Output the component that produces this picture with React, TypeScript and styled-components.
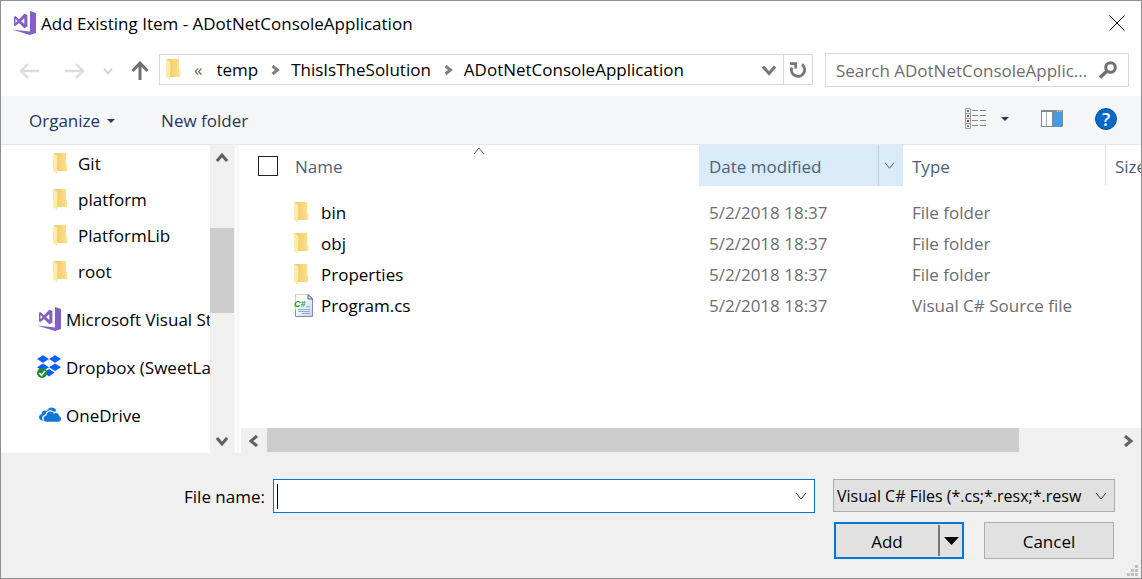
import React from "react";
import styled, { createGlobalStyle, css } from "styled-components";

const GlobalStyle = createGlobalStyle`
  * { box-sizing: border-box; }
  html, body { margin: 0; }
  body, button, input, select {
    font-family: "Open Sans", "Noto Sans", sans-serif;
    font-size: 17px;
    line-height: 24px;
    color: #000;
  }
  button { margin: 0; padding: 0; border: 0; background: none; }
  svg { display: block; flex: none; }
`;

/* ---------- window ---------- */

const Dialog = styled.div`
  display: flex;
  flex-direction: column;
  min-height: 100vh;
  border: 1px solid #8f8f8f;
  background: #fff;
`;

const TitleBar = styled.header`
  display: flex;
  align-items: center;
  height: 44px;
  padding: 0 16px 0 11px;
  gap: 5px;
`;

const Title = styled.h1`
  flex: 1;
  margin: 0;
  padding-top: 2px;
  font-size: 17px;
  font-weight: 400;
  white-space: nowrap;
`;

const IconButton = styled.button`
  display: flex;
  align-items: center;
  justify-content: center;
  flex: none;
`;

/* ---------- navigation ---------- */

const NavRow = styled.nav`
  display: flex;
  align-items: center;
  height: 51px;
  padding: 0 12px 0 18px;
`;

const History = styled.div`
  display: flex;
  align-items: center;
  gap: 18px;
  flex: none;
`;

const Travel = styled.div`
  display: flex;
  gap: 26px;
`;

const AddressBar = styled.div`
  display: flex;
  align-items: stretch;
  flex: 1;
  min-width: 0;
  height: 31px;
  margin: -2px 12px 0 10px;
  border: 1px solid #d9d9d9;
`;

const Crumbs = styled.ol`
  display: flex;
  align-items: center;
  flex: 1;
  min-width: 0;
  margin: 0;
  padding: 0 0 0 6px;
  list-style: none;
  white-space: nowrap;
  overflow: hidden;
`;

const Crumb = styled.li<{ $lead?: boolean }>`
  display: flex;
  align-items: center;
  margin-right: ${(p) => (p.$lead ? 14 : 11)}px;
  gap: 12px;
`;

const Overflowed = styled.span`
  color: #606060;
`;

const AddressButton = styled(IconButton)<{ $divided?: boolean }>`
  width: 29px;
  ${(p) => p.$divided && css`border-left: 1px solid #d9d9d9;`}
`;

const SearchBox = styled.label`
  display: flex;
  align-items: center;
  width: 304px;
  height: 34px;
  margin-top: -2px;
  padding: 0 11px 0 10px;
  border: 1px solid #d9d9d9;
`;

const SearchInput = styled.input`
  flex: 1;
  min-width: 0;
  padding: 2px 0 0;
  border: 0;
  outline: 0;
  background: none;
  text-overflow: ellipsis;
  &::placeholder { color: #6d6d6d; opacity: 1; }
`;

/* ---------- toolbar ---------- */

const Toolbar = styled.div`
  display: flex;
  align-items: center;
  height: 49px;
  padding: 0 24px 0 28px;
  background: #f5f6f7;
  border-bottom: 1px solid #e5e7ea;
`;

const ToolButton = styled.button`
  display: flex;
  align-items: center;
  gap: 7px;
  margin-right: 46px;
  padding-top: 2px;
  color: #1e395b;
`;

const ToolIcons = styled.div`
  display: flex;
  align-items: center;
  gap: 32px;
  height: 45px;
  margin-left: auto;
  align-self: flex-start;
`;

const ViewButton = styled(IconButton)`
  gap: 15px;
`;

/* ---------- body ---------- */

const Body = styled.div`
  display: flex;
  height: 308px;
`;

const Sidebar = styled.aside`
  display: flex;
  flex: none;
  width: 238px;
  padding-right: 4px;
  box-shadow: inset -2px 0 #f5f5f5;
`;

const Tree = styled.ul`
  flex: 1;
  min-width: 0;
  margin: 0;
  padding: 0;
  list-style: none;
  overflow: hidden;
  white-space: nowrap;
`;

const TreeItem = styled.li<{ $root?: boolean }>`
  display: flex;
  align-items: center;
  height: 36px;
  padding-left: ${(p) => (p.$root ? 36 : 52)}px;
  margin-top: ${(p) => (p.$root ? 12 : 0)}px;
  gap: ${(p) => (p.$root ? 5 : 11)}px;
`;

const TreeLabel = styled.span`
  padding-top: 2px;
`;

const ScrollBar = styled.div<{ $vertical?: boolean }>`
  display: flex;
  flex: none;
  flex-direction: ${(p) => (p.$vertical ? "column" : "row")};
  ${(p) => (p.$vertical ? "width: 25px;" : "height: 25px; margin-left: 2px;")}
  background: #f0f0f0;
`;

const ScrollArrow = styled(IconButton)`
  width: 26px;
  height: 25px;
`;

const ScrollArrowTall = styled(IconButton)`
  width: 24px;
  height: 25px;
`;

const Track = styled.div<{ $vertical?: boolean }>`
  flex: 1;
  ${(p) => (p.$vertical ? "padding: 58px 1px 0 0;" : "padding: 0 96px 1px 0;")}
`;

const Thumb = styled.div<{ $vertical?: boolean }>`
  height: ${(p) => (p.$vertical ? "85px" : "100%")};
  background: #cdcdcd;
`;

const Files = styled.main`
  display: flex;
  flex-direction: column;
  flex: 1;
  min-width: 0;
`;

const TableArea = styled.div`
  flex: 1;
  overflow: hidden;
`;

const FileTable = styled.table`
  width: 100%;
  table-layout: fixed;
  border-collapse: separate;
  border-spacing: 0;
  white-space: nowrap;
  tbody::before { content: ""; display: block; height: 11px; }
`;

const Column = styled.col<{ $width?: number }>`
  width: ${(p) => (p.$width ? `${p.$width}px` : "auto")};
`;

const HeadCell = styled.th<{ $hot?: boolean; $edge?: boolean }>`
  position: relative;
  height: 41px;
  padding: ${(p) => (p.$hot ? "0" : "2px 0 0 9px")};
  text-align: left;
  font-weight: 400;
  color: #4c607a;
  overflow: hidden;
  background: ${(p) => (p.$hot ? "#d9ebf9" : "transparent")};
  ${(p) => p.$edge && css`border-right: 1px solid #e2e2e2;`}
`;

const NameHead = styled.div`
  display: flex;
  align-items: center;
  gap: 17px;
  padding-left: 10px;
`;

const HotHead = styled.div`
  display: flex;
  align-items: stretch;
  height: 41px;
  line-height: 43px;
`;

const HotLabel = styled.span`
  flex: 1;
  padding-left: 10px;
  border-right: 1px solid #b9cfe0;
`;

const HeadMenu = styled(IconButton)`
  width: 24px;
  padding-right: 4px;
`;

const SortMark = styled.span`
  position: absolute;
  top: 0;
  left: 0;
  right: 0;
  padding-left: 20px;
  display: flex;
  justify-content: center;
`;

const Checkbox = styled.input`
  appearance: none;
  width: 20px;
  height: 20px;
  margin: 0 0 2px;
  border: 1px solid #222;
  background: #fff;
`;

const Cell = styled.td<{ $inset?: number }>`
  height: 31px;
  padding: 0 0 0 ${(p) => p.$inset ?? 9}px;
  color: #6d6d6d;
`;

const FileName = styled.span`
  display: grid;
  grid-template-columns: 27px auto;
  align-items: center;
  color: #000;
`;

/* ---------- footer ---------- */

const Footer = styled.form`
  position: relative;
  flex: 1;
  display: grid;
  grid-template-columns: 264px minmax(0, 1fr) 282px;
  grid-template-rows: 34px 37px;
  row-gap: 9px;
  padding: 26px 26px 19px 0;
  background: #f0f0f0;
`;

const FieldLabel = styled.label`
  text-align: right;
  line-height: 36px;
`;

const ComboBox = styled.div`
  display: flex;
  align-items: center;
  margin: 0 18px 0 8px;
  padding: 0 7px 0 3px;
  border: 1px solid #0078d7;
  background: #fff;
`;

const Caret = styled.span`
  width: 1px;
  height: 25px;
  background: #000;
`;

const NameInput = styled.input`
  flex: 1;
  min-width: 0;
  padding: 0;
  border: 0;
  outline: 0;
  background: none;
`;

const FilterBox = styled.div`
  position: relative;
  height: 33px;
`;

const Filter = styled.select`
  appearance: none;
  width: 100%;
  height: 33px;
  padding: 1px 28px 0 3px;
  border: 1px solid #adadad;
  border-radius: 0;
  background: #e1e1e1;
  font-size: 16px;
`;

const FilterArrow = styled.span`
  position: absolute;
  right: 8px;
  top: 11px;
  pointer-events: none;
`;

const Actions = styled.div`
  grid-column: 3;
  display: flex;
  justify-content: space-between;
  padding: 0 1px;
`;

const SplitButton = styled.div`
  display: flex;
  align-items: stretch;
  width: 130px;
  border: 2px solid #0078d7;
  background: #e1e1e1;
`;

const AddButton = styled.button`
  flex: 1;
  padding-top: 2px;
`;

const AddMenu = styled(IconButton)`
  width: 24px;
  margin: 1px 0;
  border-left: 2px solid #777;
`;

const CancelButton = styled.button`
  width: 130px;
  padding-top: 2px;
  border: 1px solid #adadad;
  background: #e1e1e1;
`;

const Grip = styled.span`
  position: absolute;
  right: 3px;
  bottom: 2px;
`;

/* ---------- icons ---------- */

const VisualStudioIcon = () => (
  <svg width="24" height="24" viewBox="0 0 24 24" fill="#865fc5" aria-hidden="true">
    <path d="M18 0 24 2V22L18 24 0 18.5 18 20.5Z" />
    <path
      fillRule="evenodd"
      d="M12.3 2.7 15.4 4V15.8L12.3 17.2 7 12 3.4 15 2 14.4V5.8L3.4 5.1 7 8.2ZM3.5 8V12L5.6 10ZM12.3 7.2 9 10 12.3 13Z"
    />
  </svg>
);

const FolderIcon = () => (
  <svg width="14" height="21" viewBox="0 0 14 21" aria-hidden="true">
    <defs>
      <linearGradient id="folderBack" x1="0" x2="1">
        <stop offset="0.2" stopColor="#efcb6c" />
        <stop offset="1" stopColor="#ffe08a" />
      </linearGradient>
    </defs>
    <path d="M0 0H13V11L14 12V18H4V3Z" fill="url(#folderBack)" />
    <path d="M0 0 4.5 3.5 4 19V21L0 18Z" fill="#ffeaaa" />
  </svg>
);

const SourceFileIcon = () => (
  <svg width="19" height="23" viewBox="0 0 19 23" aria-hidden="true">
    <defs>
      <linearGradient id="sheet" x1="0" y1="0" x2="1" y2="1">
        <stop offset="0.3" stopColor="#fff" />
        <stop offset="1" stopColor="#c3d0ea" />
      </linearGradient>
    </defs>
    <path d="M1.5 .5H14L18.5 5V22.5H1.5Z" fill="url(#sheet)" stroke="#7a8fb2" />
    <path d="M1.5 16V.5H14" fill="none" stroke="#c6d2dc" />
    <path d="M14 .5V5H18.5Z" fill="#e8eef8" stroke="#4f6075" />
    <path d="M12 12.5H16M4 15.5H16M4 17.5H16M8 19.5H16" stroke="#9aabc9" />
    <text x="0" y="13" fontFamily="Liberation Sans, sans-serif" fontSize="9" fontWeight="700" fontStyle="italic" fill="#17a117">
      C#
    </text>
  </svg>
);

const DropboxIcon = () => (
  <svg width="24" height="24" viewBox="0 0 24 24" aria-hidden="true">
    <path
      fill="#0061ff"
      d="M6 .3 12 4 6 7.8 0 4ZM18 .3 24 4 18 7.8 12 4ZM6 8.6 12 12.3 6 16 0 12.3ZM18 8.6 24 12.3 18 16 12 12.3ZM12 14 17.5 17.5 12 21.5 6.5 17.5Z"
    />
    <circle cx="5" cy="18" r="5" fill="#1d8a2c" />
    <path d="M2.3 18 4.5 20.2 8 16" fill="none" stroke="#fff" strokeWidth="1.6" />
  </svg>
);

const OneDriveIcon = () => (
  <svg width="24" height="24" viewBox="0 0 24 24" fill="#0f78d7" aria-hidden="true">
    <path d="M6 17.5H5C3 17.3 2 15.8 2 14.3 2 12.6 3.2 11.5 4.6 11.2 4.6 9 6.2 7.5 8 7.5 8.700 7.5 9.3 7.7 9.8 8 10.8 6 12.6 4.500 14.5 4.500 17 4.500 19 6 19.6 8.400 18.5 8.200 17.600 8.400 16.900 8.800 16 7.800 14.700 7.200 13.300 7.200 11 7.200 9 8.900 8.400 11.400 6.500 11.900 5 13.300 5 15.300 5 16.200 5.500 17 6 17.500Z" />
    <path d="M9.5 18.7C7.7 18.7 6.5 17.4 6.5 15.7 6.5 14 7.8 12.7 9.5 12.6 9.5 10.3 11.2 8.6 13.4 8.6 14.9 8.6 16.2 9.4 16.9 10.7 17.5 10.2 18.2 9.9 19 9.9 20.7 9.9 22 11.2 22 12.9 23.2 13.2 24 14.4 24 15.7 24 17.4 22.8 18.7 21.2 18.7Z" />
  </svg>
);

type ChevronProps = { dir: "up" | "down" | "left" | "right"; size?: number; weight?: number; color?: string };

const turns = { down: 0, left: 90, up: 180, right: 270 };

const Chevron = ({ dir, size = 12, weight = 3, color = "#606060" }: ChevronProps) => (
  <svg width={size} height={size} viewBox={`0 0 ${size} ${size}`} aria-hidden="true">
    <path
      transform={`rotate(${turns[dir]} ${size / 2} ${size / 2})`}
      d={`M1 ${size / 4}L${size / 2} ${size * 0.75}L${size - 1} ${size / 4}`}
      fill="none"
      stroke={color}
      strokeWidth={weight}
    />
  </svg>
);

const ArrowIcon = ({ flip }: { flip?: boolean }) => (
  <svg width="20" height="16" viewBox="0 0 20 16" aria-hidden="true">
    <path
      transform={flip ? "rotate(180 10 8)" : undefined}
      d="M20 8H2M9 1 2 8 9 15"
      fill="none"
      stroke="#dcdcdc"
      strokeWidth="2.4"
    />
  </svg>
);

const UpIcon = () => (
  <svg width="18" height="19" viewBox="0 0 18 19" aria-hidden="true">
    <path d="M9 19V2M1.5 10 9 2 16.5 10" fill="none" stroke="#707070" strokeWidth="3" />
  </svg>
);

const TriangleIcon = ({ width = 8, height = 4, color = "#1e395b" }) => (
  <svg width={width} height={height} viewBox="0 0 10 5" preserveAspectRatio="none" fill={color} aria-hidden="true">
    <path d="M0 0H10L5 5Z" />
  </svg>
);

const RefreshIcon = () => (
  <svg width="18" height="18" viewBox="0 0 18 18" aria-hidden="true">
    <path d="M13 3.5A6.6 6.6 0 1 1 2.800 6.500" fill="none" stroke="#777" strokeWidth="3" />
    <path d="M1 1.300H8V7.500H5.300V4H1Z" fill="#777" />
  </svg>
);

const SearchIcon = () => (
  <svg width="18" height="18" viewBox="0 0 18 18" fill="none" stroke="#707070" aria-hidden="true">
    <circle cx="11.500" cy="6.500" r="4.800" strokeWidth="3" />
    <path d="M7.500 10.500 1 16.500" strokeWidth="3.400" />
  </svg>
);

const CloseIcon = () => (
  <svg width="16" height="16" viewBox="0 0 16 16" aria-hidden="true">
    <path d="M.5 .5 15.5 15.5M15.5 .5 .5 15.5" stroke="#000" />
  </svg>
);

const DetailsIcon = () => (
  <svg width="21" height="21" viewBox="0 0 21 21" fill="none" aria-hidden="true">
    <path d="M.5 .5H5.5V20.5H.5ZM.5 5.5H5.5M.5 10.5H5.5M.5 15.5H5.5" stroke="#9a9a9a" />
    <path d="M7 2.5H13M15 2.5H21M7 7.5H13M15 7.5H21M7 12.5H13M15 12.5H21M7 17.5H13M15 17.5H21" stroke="#858585" />
    <path d="M2 2H4V4H2Z" fill="#3f7fc0" />
    <path d="M2 7H4V9H2Z" fill="#8a6a3a" />
    <path d="M2 12H4V14H2Z" fill="#d02020" />
    <path d="M2 17H4V19H2Z" fill="#7fa850" />
  </svg>
);

const PaneIcon = () => (
  <svg width="22" height="17" viewBox="0 0 22 17" aria-hidden="true">
    <path d="M.5 .5H21.5V16.5H.5Z" fill="#fff" stroke="#808890" />
    <path d="M0 0H22V2H0Z" fill="#808890" />
    <path d="M16 1H17M18 1H19M20 1H21" stroke="#fff" />
    <path d="M5.5 2V16" stroke="#a8adb2" />
    <path d="M12 2H21V16H12Z" fill="#459be3" />
    <path d="M11.5 2V16" stroke="#808890" />
  </svg>
);

const HelpBadge = styled(IconButton)`
  width: 22px;
  height: 22px;
  border: 1px solid #0a4f94;
  border-radius: 50%;
  background: #0669c8;
  color: #fff;
  font-size: 18px;
  font-weight: 600;
`;

const GripIcon = () => (
  <svg width="11" height="11" viewBox="0 0 11 11" fill="#bfbfbf" aria-hidden="true">
    <path d="M8 0H11V3H8ZM4 4H7V7H4ZM8 4H11V7H8ZM0 8H3V11H0ZM4 8H7V11H4ZM8 8H11V11H8Z" />
  </svg>
);

/* ---------- data ---------- */

const folders = ["Git", "platform", "PlatformLib", "root"];

const roots = [
  { label: "Microsoft Visual Studio", icon: <VisualStudioIcon /> },
  { label: "Dropbox (SweetLabs)", icon: <DropboxIcon /> },
  { label: "OneDrive", icon: <OneDriveIcon /> },
];

const files = [
  { name: "bin", type: "File folder" },
  { name: "obj", type: "File folder" },
  { name: "Properties", type: "File folder" },
  { name: "Program.cs", type: "Visual C# Source file" },
];

export default function App() {
  return (
    <Dialog role="dialog" aria-labelledby="dialog-title">
      <GlobalStyle />
      <TitleBar>
        <VisualStudioIcon />
        <Title id="dialog-title">Add Existing Item - ADotNetConsoleApplication</Title>
        <IconButton aria-label="Close"><CloseIcon /></IconButton>
      </TitleBar>

      <NavRow>
        <History>
          <Travel>
            <IconButton aria-label="Back"><ArrowIcon /></IconButton>
            <IconButton aria-label="Forward"><ArrowIcon flip /></IconButton>
          </Travel>
          <IconButton aria-label="Recent locations">
            <Chevron dir="down" size={10} weight={2} color="#d4d4d4" />
          </IconButton>
          <IconButton aria-label="Up"><UpIcon /></IconButton>
        </History>
        <AddressBar>
          <Crumbs>
            <Crumb $lead><FolderIcon /></Crumb>
            <Crumb $lead><Overflowed>«</Overflowed></Crumb>
            <Crumb>temp <Chevron dir="right" size={10} color="#808080" /></Crumb>
            <Crumb>ThisIsTheSolution <Chevron dir="right" size={10} color="#808080" /></Crumb>
            <Crumb>ADotNetConsoleApplication</Crumb>
          </Crumbs>
          <AddressButton aria-label="Previous locations"><Chevron dir="down" size={14} color="#777" /></AddressButton>
          <AddressButton $divided aria-label="Refresh"><RefreshIcon /></AddressButton>
        </AddressBar>
        <SearchBox>
          <SearchInput type="text" aria-label="Search" placeholder="Search ADotNetConsoleApplic..." />
          <SearchIcon />
        </SearchBox>
      </NavRow>

      <Toolbar>
        <ToolButton>Organize <TriangleIcon /></ToolButton>
        <ToolButton>New folder</ToolButton>
        <ToolIcons>
          <ViewButton aria-label="Change view"><DetailsIcon /><TriangleIcon /></ViewButton>
          <IconButton aria-label="Preview pane"><PaneIcon /></IconButton>
          <HelpBadge aria-label="Help">?</HelpBadge>
        </ToolIcons>
      </Toolbar>

      <Body>
        <Sidebar>
          <Tree>
            {folders.map((name) => (
              <TreeItem key={name}><FolderIcon /><TreeLabel>{name}</TreeLabel></TreeItem>
            ))}
            {roots.map((root) => (
              <TreeItem key={root.label} $root>{root.icon}<TreeLabel>{root.label}</TreeLabel></TreeItem>
            ))}
          </Tree>
          <ScrollBar $vertical>
            <ScrollArrowTall aria-label="Scroll up"><Chevron dir="up" /></ScrollArrowTall>
            <Track $vertical><Thumb $vertical /></Track>
            <ScrollArrowTall aria-label="Scroll down"><Chevron dir="down" /></ScrollArrowTall>
          </ScrollBar>
        </Sidebar>

        <Files>
          <TableArea>
            <FileTable>
              <colgroup>
                <Column />
                <Column $width={204} />
                <Column $width={203} />
                <Column $width={35} />
              </colgroup>
              <thead>
                <tr>
                  <HeadCell>
                    <NameHead>
                      <Checkbox type="checkbox" aria-label="Select all" />
                      Name
                    </NameHead>
                    <SortMark><Chevron dir="up" size={12} weight={1} /></SortMark>
                  </HeadCell>
                  <HeadCell $hot>
                    <HotHead>
                      <HotLabel>Date modified</HotLabel>
                      <HeadMenu aria-label="Filter by date"><Chevron dir="down" size={11} weight={1} /></HeadMenu>
                    </HotHead>
                  </HeadCell>
                  <HeadCell $edge>Type</HeadCell>
                  <HeadCell>Size</HeadCell>
                </tr>
              </thead>
              <tbody>
                {files.map((file) => (
                  <tr key={file.name}>
                    <Cell $inset={55}>
                      <FileName>
                        {file.type === "File folder" ? <FolderIcon /> : <SourceFileIcon />}
                        {file.name}
                      </FileName>
                    </Cell>
                    <Cell $inset={10}>5/2/2018 18:37</Cell>
                    <Cell>{file.type}</Cell>
                    <Cell />
                  </tr>
                ))}
              </tbody>
            </FileTable>
          </TableArea>
          <ScrollBar>
            <ScrollArrow aria-label="Scroll left"><Chevron dir="left" /></ScrollArrow>
            <Track><Thumb /></Track>
            <ScrollArrow aria-label="Scroll right"><Chevron dir="right" /></ScrollArrow>
          </ScrollBar>
        </Files>
      </Body>

      <Footer onSubmit={(e: React.FormEvent) => e.preventDefault()}>
        <FieldLabel htmlFor="file-name">File name:</FieldLabel>
        <ComboBox>
          <Caret />
          <NameInput id="file-name" type="text" />
          <Chevron dir="down" size={12} weight={1} color="#333" />
        </ComboBox>
        <FilterBox>
          <Filter aria-label="File type">
            <option>Visual C# Files (*.cs;*.resx;*.resw</option>
          </Filter>
          <FilterArrow><Chevron dir="down" size={12} weight={1} color="#333" /></FilterArrow>
        </FilterBox>
        <Actions>
          <SplitButton>
            <AddButton type="submit">Add</AddButton>
            <AddMenu type="button" aria-label="More add options">
              <TriangleIcon width={15} height={8} color="#000" />
            </AddMenu>
          </SplitButton>
          <CancelButton type="button">Cancel</CancelButton>
        </Actions>
        <Grip><GripIcon /></Grip>
      </Footer>
    </Dialog>
  );
}
